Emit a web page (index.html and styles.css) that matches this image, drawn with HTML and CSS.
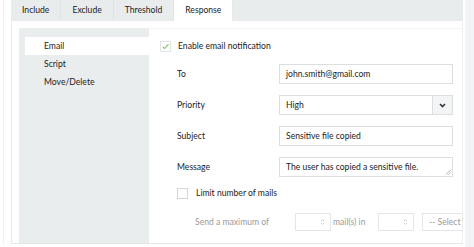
FILE: index.html
```html
<!DOCTYPE html>
<html>
<head>
<meta charset="utf-8">
<link rel="stylesheet" href="styles.css">
</head>
<body>
<div class="page">
  <div class="frame">
    <div class="tabs">
      <div class="tab">Include</div>
      <div class="tab">Exclude</div>
      <div class="tab">Threshold</div>
      <div class="tab active">Response</div>
    </div>
    <div class="panel">
      <aside class="side">
        <div class="item active">Email</div>
        <div class="item">Script</div>
        <div class="item">Move/Delete</div>
      </aside>
      <div class="form">
        <div class="check-row top">
          <span class="cb checked"><svg width="11" height="11" viewBox="0 0 11 11"><path d="M2 5.6 L4.4 8 L9.2 2.6" fill="none" stroke="#7dc05a" stroke-width="1.3"/></svg></span>
          <span class="check-text">Enable email notification</span>
        </div>
        <div class="row first">
          <span class="lbl">To</span>
          <div class="input">john.smith@gmail.com</div>
        </div>
        <div class="row">
          <span class="lbl">Priority</span>
          <div class="input select">
            <span class="val">High</span>
            <span class="btn"><svg width="7" height="5" viewBox="0 0 7 5"><path d="M1 1 L3.5 3.6 L6 1" fill="none" stroke="#333" stroke-width="1.5"/></svg></span>
          </div>
        </div>
        <div class="row">
          <span class="lbl">Subject</span>
          <div class="input">Sensitive file copied</div>
        </div>
        <div class="row">
          <span class="lbl">Message</span>
          <div class="input area">The user has copied a sensitive file.
            <svg class="grip" width="6" height="6" viewBox="0 0 6 6"><path d="M5.5 1 L1 5.5 M5.5 3.5 L3.5 5.5" stroke="#999" stroke-width="0.8"/></svg>
          </div>
        </div>
        <div class="check-row limit">
          <span class="cb"></span>
          <span class="check-text">Limit number of mails</span>
        </div>
        <div class="send-row">
          <span class="muted first-text">Send a maximum of</span>
          <div class="num n1"><span class="spin"><svg width="5" height="8" viewBox="0 0 5 8"><path d="M1 3 L2.5 1.5 L4 3 M1 5 L2.5 6.5 L4 5" fill="none" stroke="#c4c4c4" stroke-width="0.8"/></svg></span></div>
          <span class="muted mid">mail(s) in</span>
          <div class="num n2"><span class="spin"><svg width="5" height="8" viewBox="0 0 5 8"><path d="M1 3 L2.5 1.5 L4 3 M1 5 L2.5 6.5 L4 5" fill="none" stroke="#c4c4c4" stroke-width="0.8"/></svg></span></div>
          <div class="sel">-- Select Value --</div>
        </div>
      </div>
    </div>
  </div>
  <div class="edge"></div>
</div>
</body>
</html>
```

FILE: styles.css
```css
* { box-sizing: border-box; }
html, body { margin: 0; padding: 0; }
body {
  width: 474px;
  height: 247px;
  overflow: hidden;
  background: #fff;
  font-family: Lato, "Open Sans", sans-serif;
  font-size: 8.6px;
  color: #222;
}
.page {
  display: flex;
  height: 247px;
  padding-left: 3px;
}
.frame {
  width: 460px;
  height: 244px;
  padding-left: 7px;
  border-left: 1px solid #f0f1f2;
  display: flex;
  flex-direction: column;
  overflow: hidden;
}
.edge {
  width: 9px;
  margin-left: 2px;
  background: #f3f4f5;
  height: 247px;
}
.tabs {
  display: flex;
  height: 21px;
  background: #e9eced;
  flex-shrink: 0;
}
.tab {
  padding: 0 11px 0 11px;
  line-height: 21px;
  border-right: 1px solid #dfe3e4;
}
.tab.active {
  background: #fff;
  padding: 0 11px;
  border-right: 1px solid #e6e8e9;
}
.panel {
  flex: 1;
  display: flex;
  background: #fff;
  border-left: 1px solid #e8eaeb;
  border-right: 1px solid #eceeef;
  border-bottom: 1px solid #e4e6e7;
  padding: 7px 0 0 7px;
  min-height: 0;
}
.side {
  width: 130px;
  background: #eaedee;
  padding-top: 9px;
  padding-left: 6px;
}
.item {
  height: 18px;
  line-height: 18px;
  padding-left: 19px;
}
.item.active {
  background: #fff;
}
.form {
  flex: 1;
  padding: 8px 0 0 11px;
  display: flex;
  flex-direction: column;
  border-top: 1px solid #f2f3f4;
  min-width: 0;
}
.check-row {
  display: flex;
  align-items: center;
  height: 18px;
}
.cb {
  width: 11px;
  height: 11px;
  border: 1px solid #d4d6d8;
  background: #fff;
  display: flex;
  align-items: center;
  justify-content: center;
  flex-shrink: 0;
}
.cb.checked {
  border-color: #e2e4e5;
}
.cb svg { display: block; }
.check-text { margin-left: 7px; }
.check-row.limit {
  margin-top: 7px;
  padding-left: 17px;
}
.check-row.limit .check-text { margin-left: 8px; }
.row {
  display: flex;
  align-items: center;
  height: 20px;
  margin-top: 11px;
  padding-left: 17px;
}
.row.first { margin-top: 9px; }
.lbl { width: 102px; flex-shrink: 0; }
.input {
  width: 174px;
  height: 20px;
  border: 1px solid #dcdfe0;
  padding: 0 6px;
  line-height: 18px;
  background: #fff;
  position: relative;
  white-space: nowrap;
  flex-shrink: 0;
}
.select {
  display: flex;
  padding-right: 0;
}
.select .val { flex: 1; }
.select .btn {
  width: 20px;
  border-left: 1px solid #dcdfe0;
  background: #f3f4f5;
  display: flex;
  align-items: center;
  justify-content: center;
}
.grip {
  position: absolute;
  right: 1px;
  bottom: 1px;
}
.send-row {
  display: flex;
  align-items: center;
  height: 18px;
  margin-top: 11px;
  padding-left: 35px;
  white-space: nowrap;
}
.muted { color: #9a9a9a; }
.first-text { width: 100px; flex-shrink: 0; }
.num {
  width: 36px;
  height: 18px;
  border: 1px solid #e4e6e7;
  display: flex;
  align-items: center;
  justify-content: flex-end;
  padding-right: 5px;
  flex-shrink: 0;
}
.mid { margin-left: 2px; width: 45px; flex-shrink: 0; }
.spin svg { display: block; }
.sel {
  margin-left: 8px;
  height: 18px;
  width: 80px;
  flex-shrink: 0;
  border: 1px solid #e4e6e7;
  line-height: 16px;
  padding-left: 6px;
  color: #9a9a9a;
}
```
